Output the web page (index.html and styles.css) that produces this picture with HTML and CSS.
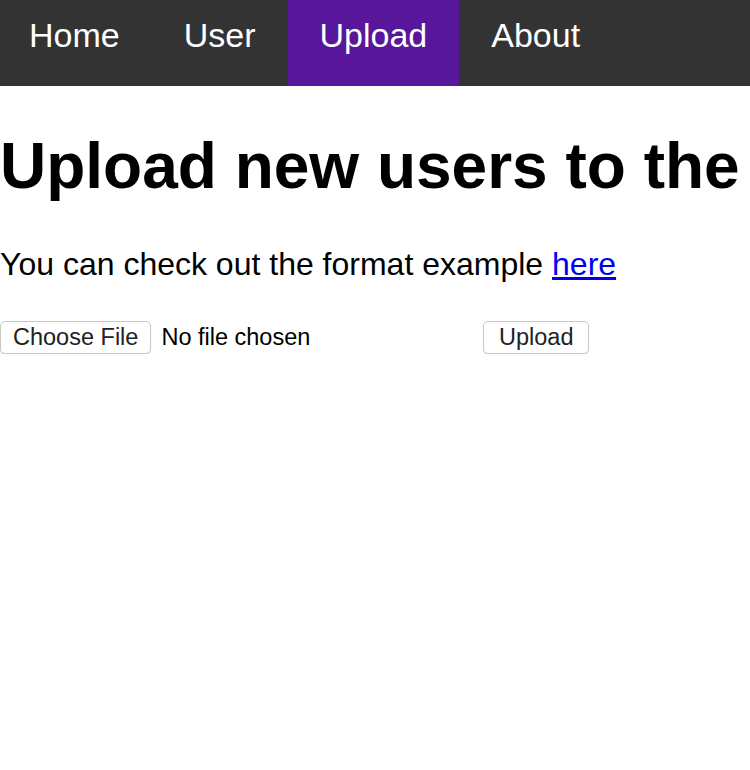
FILE: index.html
```html
<!DOCTYPE html>
<html lang="en">
<head>
<meta charset="utf-8">
<title>Upload</title>
<link rel="stylesheet" href="styles.css">
</head>
<body>
<nav class="topnav">
  <a class="nav-item" href="#">Home</a>
  <a class="nav-item" href="#">User</a>
  <a class="nav-item active" href="#">Upload</a>
  <a class="nav-item" href="#">About</a>
</nav>
<main class="content">
  <h1 class="title">Upload new users to the</h1>
  <p class="lead">You can check out the format example <a class="link" href="#">here</a></p>
  <form class="upload-form">
    <span class="file-input">
      <span class="btn btn-choose">Choose File</span>
      <span class="file-name">No file chosen</span>
    </span>
    <button type="button" class="btn btn-upload">Upload</button>
  </form>
</main>
</body>
</html>
```
FILE: styles.css
```css
html, body {
  margin: 0;
  padding: 0;
  background: #fff;
  overflow: hidden;
}
body {
  font-family: "Liberation Sans", Arial, sans-serif;
  color: #000;
}
.topnav {
  display: flex;
  height: 86px;
  background: #333333;
}
.nav-item {
  display: block;
  padding: 16px 32px 0;
  font-size: 34px;
  line-height: 39px;
  color: #fff;
  text-decoration: none;
}
.nav-item:first-child {
  padding-left: 29px;
}
.nav-item.active {
  background: #58169a;
}
.content {
  padding: 0;
}
.title {
  margin: 42.9px 0;
  font-size: 64px;
  font-weight: bold;
  white-space: nowrap;
}
.lead {
  margin: 32px 0;
  font-size: 32px;
}
.link {
  color: #0000ee;
  text-decoration: underline;
}
.upload-form {
  display: flex;
  align-items: center;
  gap: 7px;
  padding-top: 6px;
}
.file-input {
  display: flex;
  align-items: center;
  width: 476px;
  gap: 10px;
}
.file-name {
  font-size: 23.5px;
  color: #000;
}
.btn {
  display: inline-flex;
  align-items: center;
  box-sizing: border-box;
  height: 33px;
  background: #fff;
  border: 1px solid #c8c8c8;
  border-radius: 5px;
  box-shadow: 0 1px 1px rgba(0, 0, 0, 0.12);
  font-family: "Liberation Sans", Arial, sans-serif;
  font-size: 23.5px;
  color: #222;
  margin: 0;
}
.btn-choose {
  padding: 0 12px;
}
.btn-upload {
  padding: 0 15px;
}
```
